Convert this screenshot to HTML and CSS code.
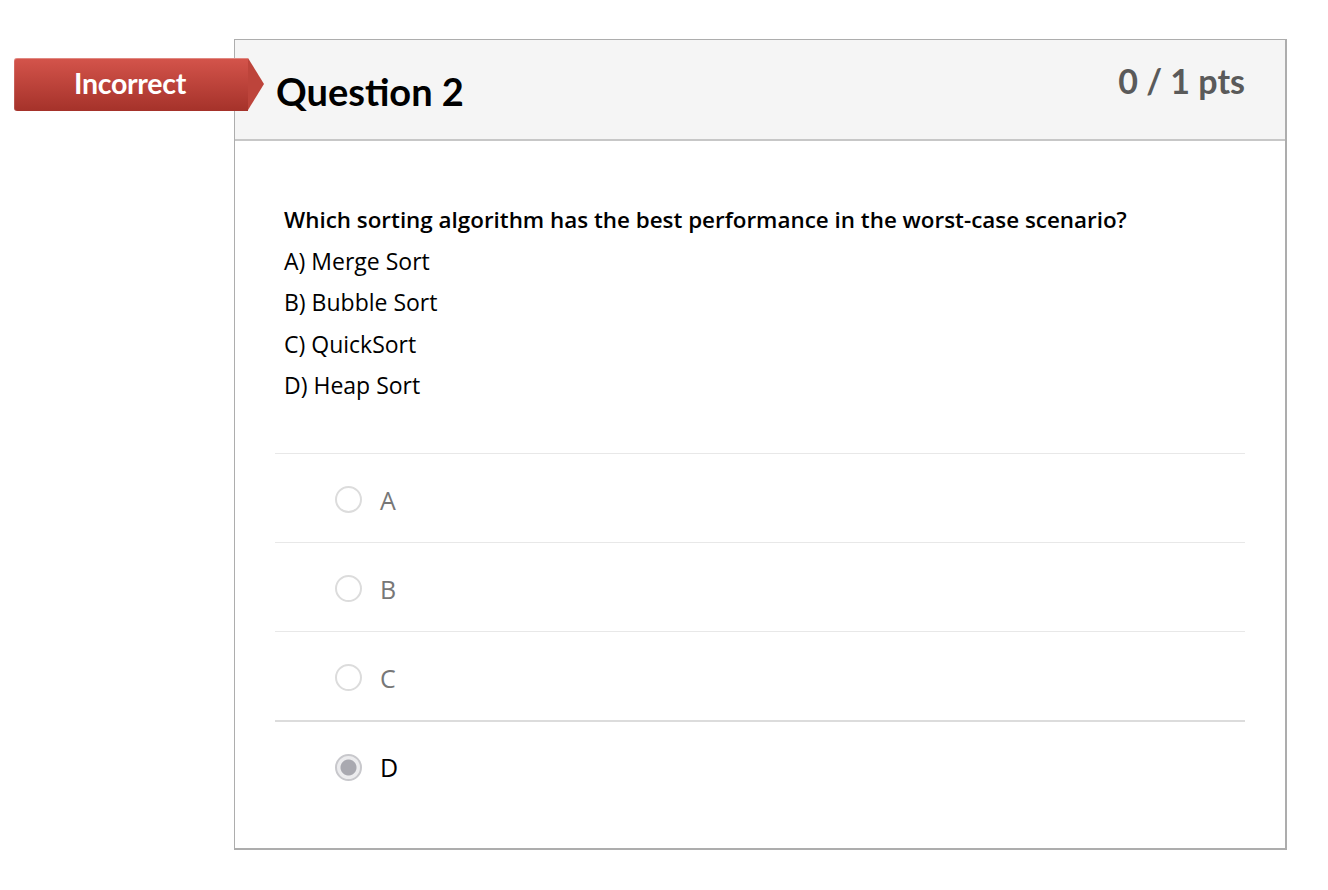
FILE: index.html
```html
<!DOCTYPE html>
<html lang="en">

<head>
  <meta charset="UTF-8">
  <title>Question 2</title>
  <link rel="stylesheet" href="styles.css">
</head>

<body>
  <div class="page">
    <div class="result-badge">Incorrect</div>

    <div class="question-card">
      <div class="question-header">
        <h2 class="question-title">Question 2</h2>
        <span class="question-points">0 / 1 pts</span>
      </div>

      <div class="question-body">
        <div class="question-text">
          <p class="prompt">Which sorting algorithm has the best performance in the worst-case scenario?</p>
          <p>A) Merge Sort</p>
          <p>B) Bubble Sort</p>
          <p>C) QuickSort</p>
          <p>D) Heap Sort</p>
        </div>

        <div class="answers">
          <div class="answer">
            <span class="radio"></span>
            <span class="answer-label">A</span>
          </div>
          <div class="answer">
            <span class="radio"></span>
            <span class="answer-label">B</span>
          </div>
          <div class="answer">
            <span class="radio"></span>
            <span class="answer-label">C</span>
          </div>
          <div class="answer selected">
            <span class="radio"></span>
            <span class="answer-label">D</span>
          </div>
        </div>
      </div>
    </div>
  </div>
</body>

</html>
```

FILE: styles.css
```css
body {
  margin: 0;
  padding: 0;
  background: #fff;
  font-family: Lato, "Open Sans", sans-serif;
  color: #000;
}

.page {
  position: relative;
  padding: 39px 42px 40px 234px;
}

.result-badge {
  position: absolute;
  top: 58px;
  left: 14px;
  width: 234px;
  height: 53px;
  box-sizing: border-box;
  display: flex;
  align-items: center;
  justify-content: center;
  padding: 0 2px 4px 0;
  color: #fff;
  font-size: 28.5px;
  font-weight: 700;
  letter-spacing: -0.3px;
  background: linear-gradient(to bottom, #d4544b, #a5322a);
  border-radius: 3px 0 0 3px;
  box-shadow: inset 0 1px 0 rgba(255, 255, 255, 0.3), inset 1px 0 0 rgba(255, 255, 255, 0.15);
  z-index: 2;
}

.result-badge::after {
  content: '';
  position: absolute;
  top: 0;
  right: -16px;
  width: 0;
  height: 0;
  border-top: 26.5px solid transparent;
  border-bottom: 26.5px solid transparent;
  border-left: 16px solid #bd443b;
}

.question-card {
  border-style: solid;
  border-width: 1px 2px 2px 1px;
  border-color: #adadad;
  width: 1050px;
}

.question-header {
  display: flex;
  justify-content: space-between;
  align-items: flex-start;
  background: #f5f5f5;
  border-bottom: 2px solid #c7c7c7;
  height: 99px;
  padding: 0 40px 0 41px;
}

.question-title {
  margin: 28px 0 0;
  font-size: 38px;
  font-weight: 700;
  color: #000;
}

.question-points {
  margin-top: 20px;
  font-size: 34px;
  font-weight: 700;
  color: #5a5a5a;
}

.question-body {
  padding: 58px 40px 39px 40px;
}

.question-text {
  padding: 0 9px 46px;
}

.question-text p {
  margin: 0;
  font-family: "Open Sans", Lato, sans-serif;
  font-size: 23px;
  line-height: 41.5px;
}

.question-text .prompt {
  font-size: 22.4px;
  font-weight: 600;
}

.answer {
  display: flex;
  align-items: center;
  box-sizing: border-box;
  height: 89px;
  padding: 4px 0 0 60px;
  border-top: 1px solid #e8e8e8;
}

.answer.selected {
  border-top: 2px solid #dcdcdc;
}

.radio {
  width: 27px;
  height: 27px;
  box-sizing: border-box;
  border: 2px solid #dcdcdc;
  border-radius: 50%;
  background: #fff;
}

.selected .radio {
  border: 2px solid #c8c8cc;
  background: radial-gradient(circle, #a9a9b0 0 7.5px, #ececee 8.5px);
}

.answer-label {
  margin-left: 18px;
  font-family: "Open Sans", Lato, sans-serif;
  font-size: 25px;
  color: #777;
}

.selected .answer-label {
  color: #000;
}
```
